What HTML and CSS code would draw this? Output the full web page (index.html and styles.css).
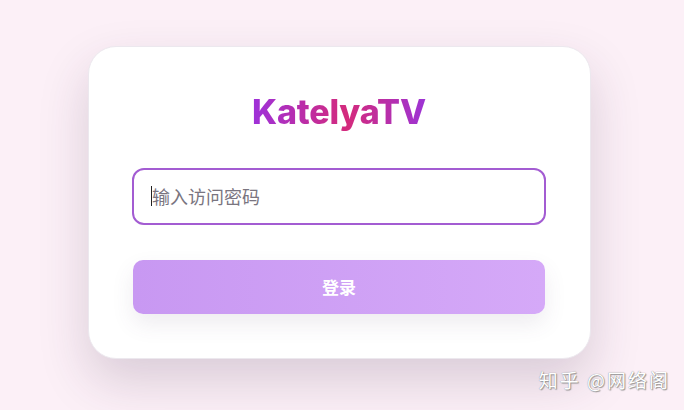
FILE: index.html
```html
<!DOCTYPE html>
<html lang="zh-CN">
<head>
    <meta charset="UTF-8">
    <meta name="viewport" content="width=device-width, initial-scale=1.0">
    <title>KatelyaTV</title>
    <link rel="stylesheet" href="styles.css">
</head>
<body>
    <section class="login">
        <h1 class="logo">KatelyaTV</h1>
        <div class="field">
            <span class="caret"></span>
            <span class="hint">输入访问密码</span>
        </div>
        <button class="submit">登录</button>
    </section>

    <div class="mark">知乎 @网络阁</div>
</body>
</html>
```

FILE: styles.css
```css
*{
    box-sizing: border-box;
}
body{
    margin: 0;
    padding: 0;
    height: 100vh;
    background-color: #fcf0f7;
    display: flex;
    justify-content: center;
    align-items: center;
    font-family: Inter, "Noto Sans CJK SC", sans-serif;
    overflow: hidden;
}
.login{
    width: 503px;
    margin: 0 5px 0 0;
    padding: 44px 44px 44px 43px;
    background-color: #fff;
    border: 1px solid #ece8ee;
    border-radius: 28px;
    box-shadow: 0 22px 50px rgba(60, 40, 70, 0.18);
    display: flex;
    flex-direction: column;
    transform: translateY(-3px);
}
.logo{
    margin: 0;
    height: 42px;
    line-height: 42px;
    text-align: center;
    font-size: 34px;
    font-weight: 800;
    letter-spacing: -0.2px;
    background: linear-gradient(90deg, #a031d6 30%, #d42a7c 52%, #9a34da 72%);
    -webkit-background-clip: text;
    background-clip: text;
    color: transparent;
}
.field{
    margin-top: 35px;
    height: 57px;
    border: 2px solid #a35cd2;
    border-radius: 12px;
    display: flex;
    align-items: center;
    padding-left: 17px;
}
.caret{
    width: 1px;
    height: 20px;
    background-color: #222;
}
.hint{
    font-size: 18px;
    color: #7a7580;
}
.submit{
    margin: 35px 1px 0;
    height: 54px;
    border: none;
    border-radius: 10px;
    background: linear-gradient(90deg, #c898f2, #d5a9f8);
    box-shadow: 0 10px 22px rgba(90, 70, 110, 0.10);
    color: #fff;
    font-family: Inter, "Noto Sans CJK SC", sans-serif;
    font-size: 17px;
    font-weight: 700;
}
.mark{
    position: absolute;
    right: 14px;
    bottom: 17px;
    font-family: "Noto Sans CJK SC", sans-serif;
    font-size: 19px;
    letter-spacing: 2px;
    color: #fff;
    text-shadow: 0 0 1px #777, 1px 1px 1px #999;
}
```
